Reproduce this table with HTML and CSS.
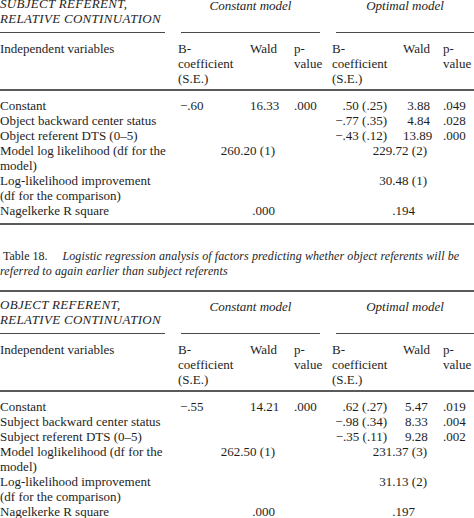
FILE: index.html
```html
<!DOCTYPE html>
<html lang="en">
<head>
<meta charset="utf-8">
<title>Logistic regression tables</title>
<link rel="stylesheet" href="styles.css">
</head>
<body>
<div class="page">

  <section class="tbl">
    <div class="grid head1">
      <div class="title">SUBJECT REFERENT,<br>RELATIVE CONTINUATION</div>
      <div class="group g-const">Constant model</div>
      <div class="group g-opt">Optimal model</div>
    </div>
    <div class="grid head2">
      <div class="c-lab">Independent variables</div>
      <div class="c-b1 h">B-<br>coefficient<br>(S.E.)</div>
      <div class="c-w1 h">Wald</div>
      <div class="c-p1 h">p-<br>value</div>
      <div class="c-b2 h">B-<br>coefficient<br>(S.E.)</div>
      <div class="c-w2 h">Wald</div>
      <div class="c-p2 h">p-<br>value</div>
    </div>
    <div class="body">
      <div class="grid row">
        <div class="c-lab">Constant</div>
        <div class="c-b1">−.60</div>
        <div class="c-w1">16.33</div>
        <div class="c-p1">.000</div>
        <div class="c-b2">.50 (.25)</div>
        <div class="c-w2 r">3.88</div>
        <div class="c-p2">.049</div>
      </div>
      <div class="grid row">
        <div class="c-lab">Object backward center status</div>
        <div class="c-b2">−.77 (.35)</div>
        <div class="c-w2 r">4.84</div>
        <div class="c-p2">.028</div>
      </div>
      <div class="grid row">
        <div class="c-lab">Object referent DTS (0–5)</div>
        <div class="c-b2">−.43 (.12)</div>
        <div class="c-w2 r">13.89</div>
        <div class="c-p2">.000</div>
      </div>
      <div class="grid row">
        <div class="c-lab">Model log likelihood (df for the<br>model)</div>
        <div class="s-const">260.20 (1)</div>
        <div class="s-opt">229.72 (2)</div>
      </div>
      <div class="grid row">
        <div class="c-lab">Log-likelihood improvement<br>(df for the comparison)</div>
        <div class="s-opt">30.48 (1)</div>
      </div>
      <div class="grid row">
        <div class="c-lab">Nagelkerke R square</div>
        <div class="s-const">.000</div>
        <div class="s-opt narrow">.194</div>
      </div>
    </div>
  </section>

  <p class="caption"><span class="cap-label">Table 18.</span><em>Logistic regression analysis of factors predicting whether object referents will be<br>referred to again earlier than subject referents</em></p>

  <section class="tbl">
    <div class="grid head1">
      <div class="title">OBJECT REFERENT,<br>RELATIVE CONTINUATION</div>
      <div class="group g-const">Constant model</div>
      <div class="group g-opt">Optimal model</div>
    </div>
    <div class="grid head2">
      <div class="c-lab">Independent variables</div>
      <div class="c-b1 h">B-<br>coefficient<br>(S.E.)</div>
      <div class="c-w1 h">Wald</div>
      <div class="c-p1 h">p-<br>value</div>
      <div class="c-b2 h">B-<br>coefficient<br>(S.E.)</div>
      <div class="c-w2 h">Wald</div>
      <div class="c-p2 h">p-<br>value</div>
    </div>
    <div class="body">
      <div class="grid row">
        <div class="c-lab">Constant</div>
        <div class="c-b1">−.55</div>
        <div class="c-w1">14.21</div>
        <div class="c-p1">.000</div>
        <div class="c-b2">.62 (.27)</div>
        <div class="c-w2 l">5.47</div>
        <div class="c-p2">.019</div>
      </div>
      <div class="grid row">
        <div class="c-lab">Subject backward center status</div>
        <div class="c-b2">−.98 (.34)</div>
        <div class="c-w2 l">8.33</div>
        <div class="c-p2">.004</div>
      </div>
      <div class="grid row">
        <div class="c-lab">Subject referent DTS (0–5)</div>
        <div class="c-b2">−.35 (.11)</div>
        <div class="c-w2 l">9.28</div>
        <div class="c-p2">.002</div>
      </div>
      <div class="grid row">
        <div class="c-lab">Model loglikelihood (df for the<br>model)</div>
        <div class="s-const">262.50 (1)</div>
        <div class="s-opt">231.37 (3)</div>
      </div>
      <div class="grid row">
        <div class="c-lab">Log-likelihood improvement<br>(df for the comparison)</div>
        <div class="s-opt">31.13 (2)</div>
      </div>
      <div class="grid row">
        <div class="c-lab">Nagelkerke R square</div>
        <div class="s-const">.000</div>
        <div class="s-opt narrow">.197</div>
      </div>
    </div>
  </section>

</div>
</body>
</html>
```

FILE: styles.css
```css
html {
  overflow: hidden;
  background: #ffffff;
}

body {
  margin: 0;
  background: #ffffff;
}

.page {
  margin-top: -11px;
  width: 474px;
  font-family: "Liberation Serif", "Times New Roman", serif;
  font-size: 13px;
  line-height: 15px;
  color: #1e1e1e;
}

.tbl {
  border-top: 2px solid #5a5a5a;
  border-bottom: 2px solid #5a5a5a;
}

.grid {
  display: grid;
  grid-template-columns: 178px 72px 44px 38px 71px 40px 31px;
  white-space: nowrap;
}

/* header band 1 */
.head1 > div {
  padding-top: 5px;
  padding-bottom: 6px;
  border-bottom: 1px solid #4a4a4a;
  font-style: italic;
}

.head1 .title {
  grid-column: 1;
  margin-right: 13px;
  letter-spacing: 0.3px;
}

.head1 .group {
  padding-top: 7px;
}

.head1 .g-const {
  grid-column: 2 / span 3;
  margin-left: 3px;
  margin-right: 12px;
  text-align: center;
}

.head1 .g-opt {
  grid-column: 5 / span 3;
  margin-left: 4px;
  text-align: center;
}

/* header band 2 */
.head2 {
  padding-top: 8px;
  padding-bottom: 3px;
  border-bottom: 2px solid #5a5a5a;
}

/* body */
.body {
  padding-top: 7px;
  padding-bottom: 5px;
}

.c-lab { grid-column: 1; }

.c-b1 { grid-column: 2; padding-left: 2px; }
.c-w1 { grid-column: 3; text-align: right; padding-right: 18px; }
.c-p1 { grid-column: 4; }
.c-b2 { grid-column: 5; text-align: right; padding-right: 16px; }
.c-w2 { grid-column: 6; }
.c-w2.r { text-align: right; padding-right: 13px; }
.c-w2.l { text-align: left; padding-left: 2px; }
.c-p2 { grid-column: 7; }

.head2 .h { text-align: left; padding-left: 0; padding-right: 0; }

.s-const {
  grid-column: 2 / span 2;
  text-align: right;
  padding-right: 19px;
}

.s-opt {
  grid-column: 5 / span 2;
  text-align: right;
  padding-right: 16px;
}

.s-opt.narrow { padding-right: 28px; }

/* caption */
.caption {
  margin: 24px 0 11px 0;
  text-indent: 3px;
  font-size: 12px;
  line-height: 15px;
  white-space: nowrap;
}

.cap-label {
  margin-right: 15px;
}

.caption em {
  font-style: italic;
  letter-spacing: 0.1px;
}
```
